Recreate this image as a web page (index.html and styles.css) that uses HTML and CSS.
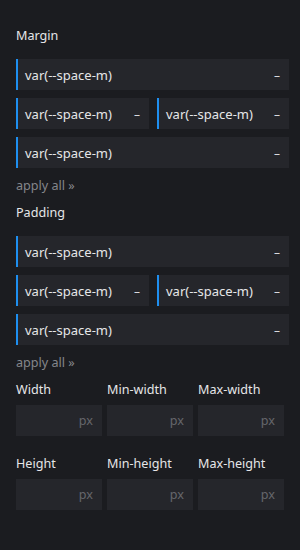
FILE: index.html
```html
<!DOCTYPE html>
<html>
<head>
<meta charset="utf-8">
<link rel="stylesheet" href="styles.css">
</head>
<body>
<div class="panel">
  <section class="group">
    <div class="label">Margin</div>
    <div class="rows">
      <div class="field"><span class="val">var(--space-m)</span><span class="dash">–</span></div>
      <div class="pair">
        <div class="field"><span class="val">var(--space-m)</span><span class="dash">–</span></div>
        <div class="field"><span class="val">var(--space-m)</span><span class="dash">–</span></div>
      </div>
      <div class="field"><span class="val">var(--space-m)</span><span class="dash">–</span></div>
    </div>
    <div class="apply">apply all »</div>
  </section>
  <section class="group">
    <div class="label">Padding</div>
    <div class="rows">
      <div class="field"><span class="val">var(--space-m)</span><span class="dash">–</span></div>
      <div class="pair">
        <div class="field"><span class="val">var(--space-m)</span><span class="dash">–</span></div>
        <div class="field"><span class="val">var(--space-m)</span><span class="dash">–</span></div>
      </div>
      <div class="field"><span class="val">var(--space-m)</span><span class="dash">–</span></div>
    </div>
    <div class="apply">apply all »</div>
  </section>
  <section class="sizes">
    <div class="size"><div class="slabel">Width</div><div class="input"><span class="unit">px</span></div></div>
    <div class="size"><div class="slabel">Min-width</div><div class="input"><span class="unit">px</span></div></div>
    <div class="size"><div class="slabel">Max-width</div><div class="input"><span class="unit">px</span></div></div>
    <div class="size"><div class="slabel">Height</div><div class="input"><span class="unit">px</span></div></div>
    <div class="size"><div class="slabel">Min-height</div><div class="input"><span class="unit">px</span></div></div>
    <div class="size"><div class="slabel">Max-height</div><div class="input"><span class="unit">px</span></div></div>
  </section>
</div>
</body>
</html>
```
FILE: styles.css
```css
html, body {
  margin: 0;
  padding: 0;
  background: #1b1c20;
  height: 100%;
}
body {
  font-family: "Noto Sans", "Open Sans", sans-serif;
  font-size: 12.6px;
  color: #e6e6e8;
}
.panel {
  padding: 25px 11px 0 16px;
}
.label {
  line-height: 22px;
  margin-bottom: 12px;
}
.rows {
  display: flex;
  flex-direction: column;
  gap: 8px;
}
.pair {
  display: grid;
  grid-template-columns: 133px 132px;
  gap: 8px;
}
.field {
  height: 31px;
  background: #25262b;
  border-left: 2px solid #1e8ff0;
  display: flex;
  align-items: center;
  justify-content: space-between;
  padding: 0 9px 0 7px;
  box-sizing: border-box;
}
.val {
  font-size: 13px;
}
.dash {
  color: #d8d8dc;
  font-size: 12px;
  padding-top: 2px;
}
.apply {
  color: #85868b;
  line-height: 22px;
  margin-top: 7px;
  margin-bottom: 5px;
}
.sizes {
  display: grid;
  grid-template-columns: repeat(3, 86px);
  column-gap: 5px;
  row-gap: 17px;
}
.slabel {
  line-height: 22px;
  margin-bottom: 4px;
}
.input {
  height: 31px;
  background: #25262b;
  display: flex;
  align-items: center;
  justify-content: flex-end;
  padding-right: 9px;
}
.unit {
  color: #66676c;
}
```
